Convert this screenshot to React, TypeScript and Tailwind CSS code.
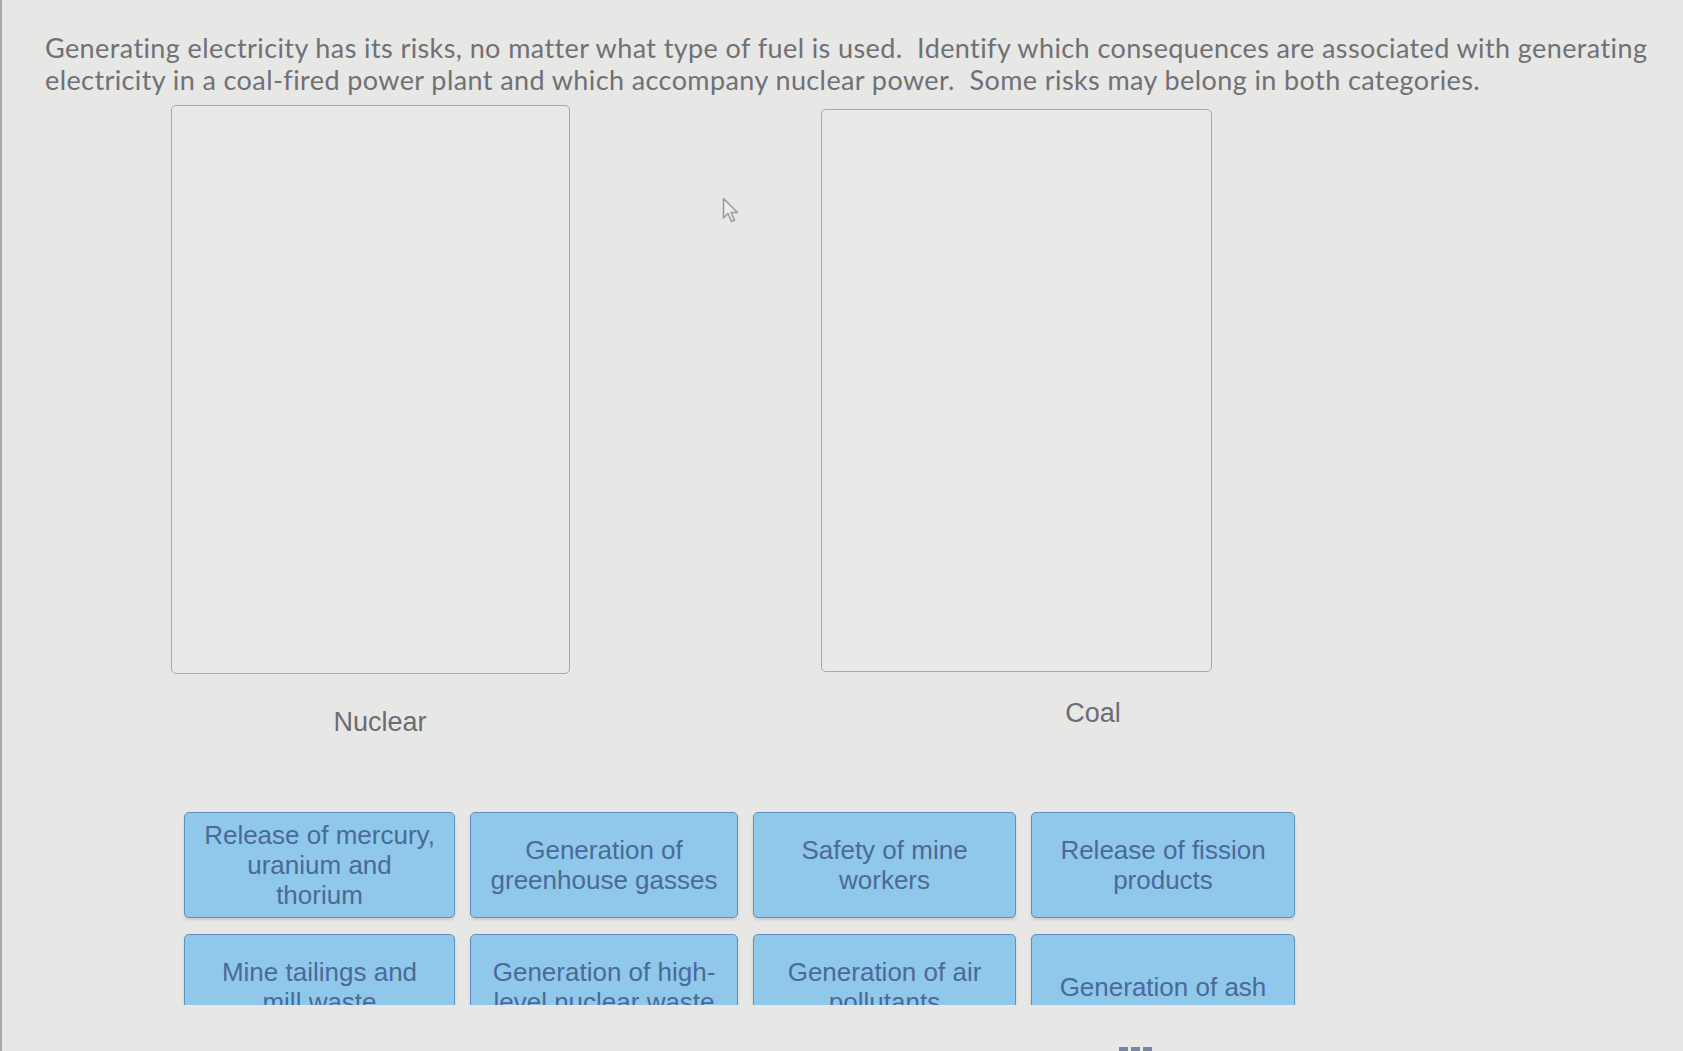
import React from 'react';

const cards = [
  { lines: ['Release of mercury,', 'uranium and', 'thorium'] },
  { lines: ['Generation of', 'greenhouse gasses'] },
  { lines: ['Safety of mine', 'workers'] },
  { lines: ['Release of fission', 'products'] },
  { lines: ['Mine tailings and', 'mill waste'] },
  { lines: ['Generation of high-', 'level nuclear waste'] },
  { lines: ['Generation of air', 'pollutants'] },
  { lines: ['Generation of ash'] },
];

const Cursor: React.FC = () => (
  <svg width="18" height="27" viewBox="0 0 18 27" className="absolute left-[722px] top-[197px]">
    <path
      d="M1.5 1.5 L1.5 21 L6 16.5 L9.5 24.5 L12.5 23.2 L9 15.5 L15.5 15.5 Z"
      fill="#ececec"
      stroke="#9c9ca4"
      strokeWidth="1.6"
      strokeLinejoin="round"
    />
  </svg>
);

export default function App() {
  return (
    <div className="relative h-[1051px] w-full overflow-hidden bg-[#e7e7e5] shadow-[inset_2px_0_0_#a8a8a8]">
      <div className="h-[1005px] overflow-hidden">
        <p
          className="pl-[45px] pt-[32px] text-[27px] leading-[32px] tracking-[0.4px] text-[#707076]"
          style={{ fontFamily: 'Lato, "Open Sans", sans-serif' }}
        >
          Generating electricity has its risks, no matter what type of fuel is used.&nbsp; Identify which consequences are associated with generating
          <br />
          electricity in a coal-fired power plant and which accompany nuclear power.&nbsp; Some risks may belong in both categories.
        </p>

        <div className="mt-[9px] flex items-start pl-[171px]">
          <div className="h-[569px] w-[399px] rounded-[5px] border-[1.5px] border-[#a8a8ab] bg-[#e9e9e7]" />
          <div className="ml-[251px] mt-[4px] h-[563px] w-[391px] rounded-[5px] border-[1.5px] border-[#a8a8ab] bg-[#e9e9e7]" />
        </div>

        <div
          className="mt-[26px] flex items-start text-[27px] leading-[27px] text-[#6c6c74]"
          style={{ fontFamily: '"Liberation Sans", Arial, sans-serif' }}
        >
          <div className="ml-[280px] mt-[9px] w-[200px] text-center">Nuclear</div>
          <div className="ml-[513px] w-[200px] text-center">Coal</div>
        </div>

        <div
          className="ml-[184px] mt-[76px] grid grid-cols-[271px_268px_263px_264px] gap-x-[15px] gap-y-[16px]"
          style={{ fontFamily: '"Liberation Sans", Arial, sans-serif' }}
        >
          {cards.map((card, idx) => (
            <div
              key={idx}
              className="flex h-[106px] flex-col items-center justify-center rounded-[5px] border-[1.5px] border-[#5f8fc1] bg-[#90c8ec] text-center text-[26px] leading-[30px] text-[#4a6a98] shadow-[0_2px_3px_rgba(0,0,0,0.12)]"
            >
              {card.lines.map((line, i) => (
                <span key={i} className="whitespace-nowrap">
                  {line}
                </span>
              ))}
            </div>
          ))}
        </div>
      </div>

      <div className="flex h-[46px] items-end pl-[1119px]">
        <div className="flex gap-[3px]">
          <div className="h-[4px] w-[9px] bg-[#7487ab]" />
          <div className="h-[4px] w-[9px] bg-[#7487ab]" />
          <div className="h-[4px] w-[9px] bg-[#7487ab]" />
        </div>
      </div>

      <Cursor />
    </div>
  );
}
